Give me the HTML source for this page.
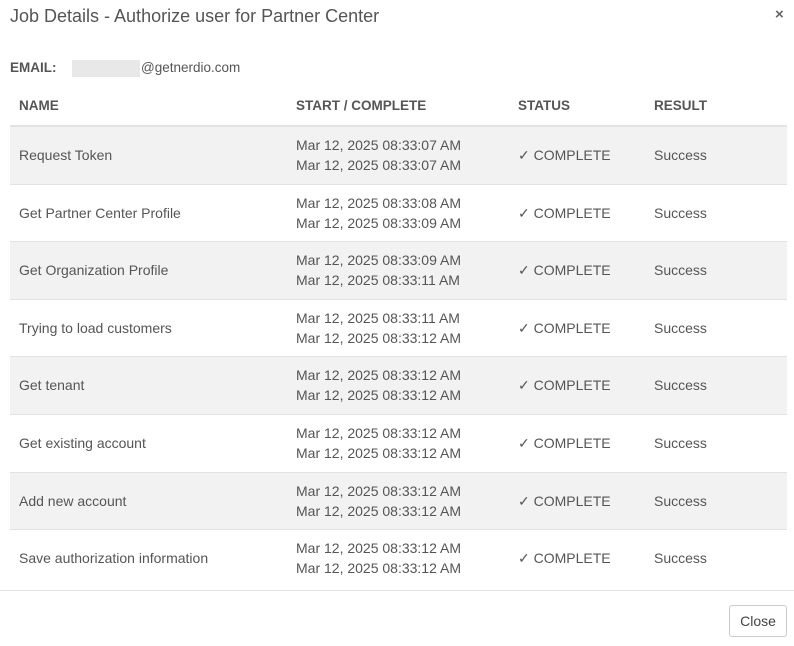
<html><head><style>
body{margin:0;width:794px;height:646px;background:#fff;font-family:"Liberation Sans",sans-serif;color:#555;position:relative;overflow:hidden}
.t{position:absolute;left:10px;top:6px;font-size:18px;color:#555}
.x{position:absolute;left:775px;top:6px;font-size:15px;font-weight:bold;color:#666}
.em{position:absolute;left:10px;top:60px;font-size:13.5px}
.blur{position:absolute;left:72px;top:60px;width:68px;height:17px;background:#e8e8e8}
.hd{position:absolute;top:98px;font-size:13.5px;font-weight:bold;color:#555}
.tbl{position:absolute;left:10px;top:125px;width:777px;border-top:2px solid #e2e2e2}
.r{height:56.6px;border-bottom:1px solid #e2e2e2;position:relative;font-size:14px}
.r:nth-child(odd){background:#f2f2f2}
.r span{position:absolute}
.n{left:9px;top:20px}.d{left:286px;top:8px;line-height:20px}.s{left:508px;top:20px}.re{left:644px;top:20px}
.foot{position:absolute;left:0;top:590px;width:794px;border-top:1px solid #e2e2e2}
.btn{position:absolute;left:729px;top:605px;width:56px;height:30px;border:1px solid #ccc;border-radius:3px;font-size:14px;line-height:30px;text-align:center;color:#444}
</style></head><body>
<div class="t">Job Details - Authorize user for Partner Center</div>
<div class="x">×</div>
<div class="em"><b>EMAIL:</b></div><div class="blur"></div>
<div class="em" style="left:141px">@getnerdio.com</div>
<div class="hd" style="left:19px">NAME</div>
<div class="hd" style="left:296px">START / COMPLETE</div>
<div class="hd" style="left:518px">STATUS</div>
<div class="hd" style="left:654px">RESULT</div>
<div class="tbl">
<div class="r"><span class="n">Request Token</span><span class="d">Mar 12, 2025 08:33:07 AM<br>Mar 12, 2025 08:33:07 AM</span><span class="s">✓ COMPLETE</span><span class="re">Success</span></div>
<div class="r"><span class="n">Get Partner Center Profile</span><span class="d">Mar 12, 2025 08:33:08 AM<br>Mar 12, 2025 08:33:09 AM</span><span class="s">✓ COMPLETE</span><span class="re">Success</span></div>
<div class="r"><span class="n">Get Organization Profile</span><span class="d">Mar 12, 2025 08:33:09 AM<br>Mar 12, 2025 08:33:11 AM</span><span class="s">✓ COMPLETE</span><span class="re">Success</span></div>
<div class="r"><span class="n">Trying to load customers</span><span class="d">Mar 12, 2025 08:33:11 AM<br>Mar 12, 2025 08:33:12 AM</span><span class="s">✓ COMPLETE</span><span class="re">Success</span></div>
<div class="r"><span class="n">Get tenant</span><span class="d">Mar 12, 2025 08:33:12 AM<br>Mar 12, 2025 08:33:12 AM</span><span class="s">✓ COMPLETE</span><span class="re">Success</span></div>
<div class="r"><span class="n">Get existing account</span><span class="d">Mar 12, 2025 08:33:12 AM<br>Mar 12, 2025 08:33:12 AM</span><span class="s">✓ COMPLETE</span><span class="re">Success</span></div>
<div class="r"><span class="n">Add new account</span><span class="d">Mar 12, 2025 08:33:12 AM<br>Mar 12, 2025 08:33:12 AM</span><span class="s">✓ COMPLETE</span><span class="re">Success</span></div>
<div class="r" style="border-bottom:none"><span class="n">Save authorization information</span><span class="d">Mar 12, 2025 08:33:12 AM<br>Mar 12, 2025 08:33:12 AM</span><span class="s">✓ COMPLETE</span><span class="re">Success</span></div>
</div>
<div class="foot"></div>
<div class="btn">Close</div>
</body></html>
